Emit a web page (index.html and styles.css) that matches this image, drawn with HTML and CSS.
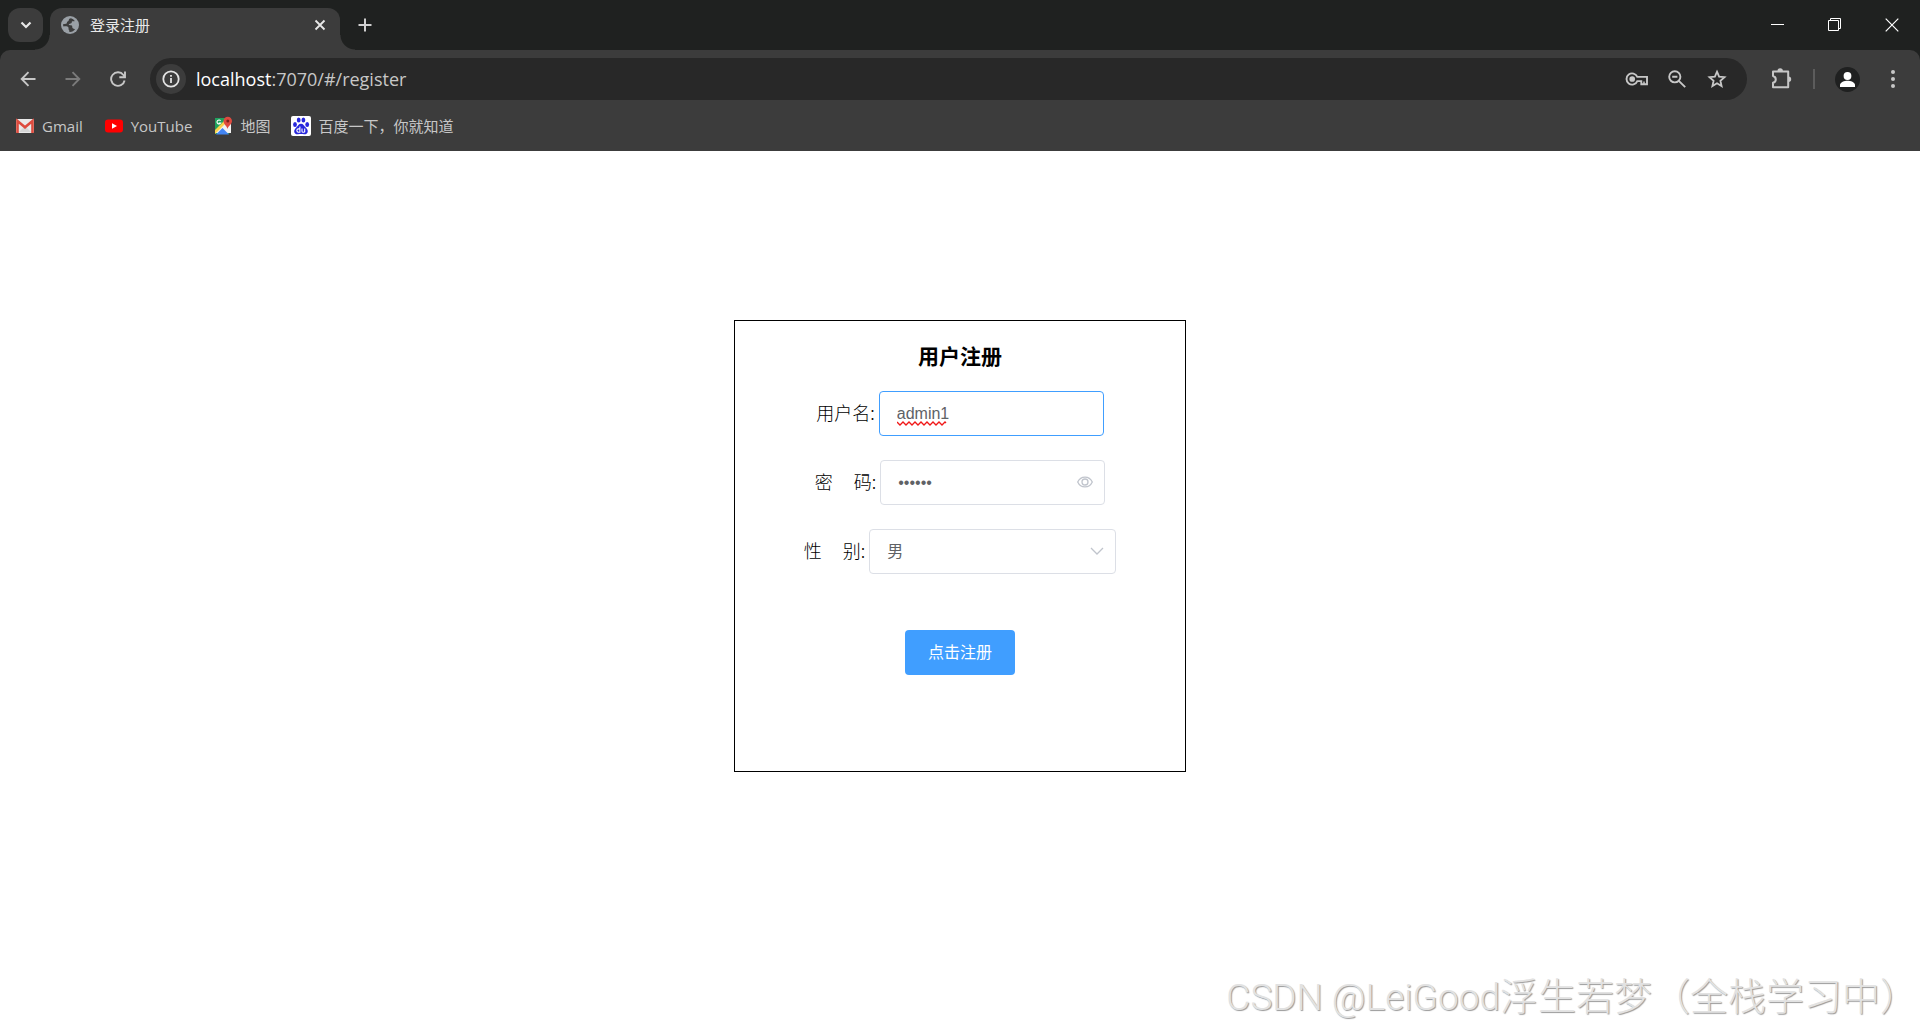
FILE: index.html
```html
<!DOCTYPE html>
<html lang="zh-CN">
<head>
<meta charset="utf-8">
<title>登录注册</title>
<link rel="stylesheet" href="styles.css">
</head>
<body>
<header class="browser">
  <div class="tabstrip">
    <button class="tab-search" type="button" aria-label="搜索标签页">
      <svg width="12" height="12" viewBox="0 0 12 12"><path d="M1.500 3.500 6 8l4.500-4.500" fill="none" stroke="#e8e8e8" stroke-width="2.200"/></svg>
    </button>
    <div class="tab">
      <svg width="18" height="18" viewBox="0 0 18 18"><circle cx="9" cy="9" r="9" fill="#9aa0a6"/><path d="M10 2.200c-3 .6-1.500 2.300-3 3-1.600.6-.6 2.200-1.800 2.600L2 8.300c0 1 .2 1.500.5 2.200 2-.3 4-.4 4.800.7.6 1-.2 2 .6 2.700.6.500.5 1.200.4 2 2.500.3 4.500-.9 5.800-2.700-.8-.8-1.900-.4-2.600-1.300-.6-1 .2-1.600-.7-2.300-1-.6-2.600 0-3.200-1 .7-1.400 1.800-.6 2.700-1.400.9-.8.1-1.700 1.100-2 1-.2 1.500.3 2.400-.3A7 7 0 0 0 10 2.200z" fill="#3c3c3c"/></svg>
      <span class="tab-title">登录注册</span>
      <button class="tab-close" type="button" aria-label="关闭">
        <svg width="12" height="12" viewBox="0 0 12 12"><path d="M1.500 1.500l9 9m0-9-9 9" stroke="#e8e8e8" stroke-width="1.800"/></svg>
      </button>
    </div>
    <button class="new-tab" type="button" aria-label="新标签页">
      <svg width="14" height="14" viewBox="0 0 14 14"><path d="M7 .5v13M.5 7h13" stroke="#d0d0d0" stroke-width="2"/></svg>
    </button>
    <div class="window-controls">
      <button type="button" aria-label="最小化"><svg width="13" height="13" viewBox="0 0 13 13"><path d="M0 6.500h13" stroke="#fff"/></svg></button>
      <button type="button" aria-label="还原"><svg width="13" height="13" viewBox="0 0 13 13" fill="none" stroke="#fff"><path d="M.5 2.500h10v10H.5zM2.500 2V.5h10v10H11"/></svg></button>
      <button type="button" aria-label="关闭窗口"><svg width="14" height="14" viewBox="0 0 14 14"><path d="M.7.7l12.600 12.600m0-12.600L.7 13.300" stroke="#fff" stroke-width="1.200"/></svg></button>
    </div>
  </div>

  <div class="chrome-body">
    <div class="toolbar">
      <button class="tool" type="button" aria-label="后退"><svg width="16" height="16" viewBox="0 0 16 16" fill="none" stroke="#c7c7c7" stroke-width="1.900"><path d="M15.500 8H2M8.500 1.200 1.700 8l6.800 6.800"/></svg></button>
      <button class="tool" type="button" aria-label="前进"><svg width="16" height="16" viewBox="0 0 16 16" fill="none" stroke="#7b7b7b" stroke-width="1.900"><path d="M.5 8H14M7.500 1.200 14.300 8l-6.800 6.800"/></svg></button>
      <button class="tool" type="button" aria-label="重新加载"><svg width="16" height="16" viewBox="0 0 16 16" fill="none" stroke="#c7c7c7" stroke-width="1.900"><path d="M14.600 9.500A6.800 6.800 0 1 1 13.400 4L15 5.700M15 .5v5.700H9.300"/></svg></button>
      <div class="omnibox">
        <button class="site-info" type="button" aria-label="网站信息"><svg width="18" height="18" viewBox="0 0 18 18" fill="none" stroke="#e3e3e3" stroke-width="1.800"><circle cx="9" cy="9" r="7.700"/><path d="M9 8v5M9 5v1.800"/></svg></button>
        <div class="url"><span class="host">localhost</span>:7070/#/register</div>
        <button class="omni-action" type="button" aria-label="密码"><svg width="24" height="14" viewBox="0 0 24 14" fill="none" stroke="#c7c7c7" stroke-width="1.900"><path d="M12.300 4.900A5.600 5.600 0 1 0 12.300 9.100h4v3.200h5.700V4.900z"/><circle cx="7.200" cy="7" r="1.900" fill="#c7c7c7"/><path d="M19 9.500v2.500" stroke-width="1.500"/></svg></button>
        <button class="omni-action" type="button" aria-label="缩放"><svg width="18" height="18" viewBox="0 0 18 18" fill="none" stroke="#c7c7c7" stroke-width="1.900"><circle cx="6.800" cy="6.800" r="5.600"/><path d="M10.800 10.800l6.400 6.400M4.200 6.800h5.200"/></svg></button>
        <button class="omni-action" type="button" aria-label="收藏"><svg width="20" height="20" viewBox="0 0 20 20" fill="none" stroke="#c7c7c7" stroke-width="1.800"><path d="M10 2.700l2.100 5 5.400.5-4.100 3.600 1.200 5.300L10 14.300l-4.600 2.800 1.200-5.300L2.500 8.200l5.400-.5z"/></svg></button>
      </div>
      <button class="tool" type="button" aria-label="扩展程序"><svg width="22" height="22" viewBox="0 0 22 22"><path d="M3 3.500h15.200v15.700H3v-4.400c3.700-1 3.700-5.800 0-6.800z" fill="none" stroke="#c7c7c7" stroke-width="2" stroke-linejoin="round"/><path d="M7.500 3a2.700 2.700 0 0 1 5.400 0zM18.500 8.500a2.700 2.700 0 0 1 0 5.400z" fill="#c7c7c7"/></svg></button>
      <span class="divider"></span>
      <button class="tool" type="button" aria-label="用户"><svg width="25" height="25" viewBox="0 0 25 25"><circle cx="12.500" cy="12.500" r="12.500" fill="#1f2020"/><circle cx="12.500" cy="9" r="3.900" fill="#fff"/><path d="M5 20v-2c0-2.700 4.500-4.200 7.500-4.200s7.500 1.500 7.500 4.200v2z" fill="#fff"/></svg></button>
      <button class="tool" type="button" aria-label="更多"><svg width="4" height="18" viewBox="0 0 4 18" fill="#c7c7c7"><circle cx="2" cy="2" r="2"/><circle cx="2" cy="9" r="2"/><circle cx="2" cy="16" r="2"/></svg></button>
    </div>
    <nav class="bookmarks">
      <a href="#gmail"><svg width="20" height="20" viewBox="0 0 20 20"><rect x="1" y="3" width="18" height="14" rx="1.500" fill="#e9e9e9"/><path d="M4 16l6-6 6 6z" fill="#d5d5d5"/><path d="M2.500 17V5L10 11.200 17.500 5v12" fill="none" stroke="#dd4b3e" stroke-width="2.600"/></svg>Gmail</a>
      <a href="#youtube"><svg width="20" height="20" viewBox="0 0 20 20"><rect x="1" y="3.500" width="18" height="13" rx="3" fill="#f00"/><path d="M8 7.200v5.600l5-2.800z" fill="#fff"/></svg>YouTube</a>
      <a href="#maps"><svg width="20" height="20" viewBox="0 0 20 20"><path d="M2 2h14v16H2z" fill="#1fa15d"/><path d="M2 17 15 4l3 3v10z" fill="#f2f2f2"/><path d="M2 14 11 5l2 2L2 18z" fill="#fbd24d"/><path d="M3 18.500l6.500-6.500 6.500 6.500z" fill="#4285f4"/><path d="M7.600 4.800a2 2 0 1 0 .1 2.200H5.800" fill="none" stroke="#fff" stroke-width="1.100"/><path d="M14.500 13c-.4-3-4-4.500-4-8a4.200 4.200 0 0 1 8.500 0c0 3.500-4 5-4.500 8z" fill="#de4a3f"/><circle cx="14.800" cy="5" r="1.500" fill="#7d211b"/></svg>地图</a>
      <a href="#baidu"><svg width="20" height="20" viewBox="0 0 20 20"><rect width="20" height="20" rx="2" fill="#fff"/><g fill="#2726dc"><ellipse cx="4" cy="8.600" rx="1.900" ry="2.500"/><ellipse cx="7.700" cy="4" rx="1.900" ry="2.600"/><ellipse cx="12.400" cy="4" rx="1.900" ry="2.600"/><ellipse cx="16.200" cy="8.600" rx="1.900" ry="2.500"/><path d="M10 7.800c2.300 0 3 2.200 4.700 3.600 4 3.500 1.600 7.300-1.700 6.800-2-.3-4-.3-6 0-3.300.5-5.700-3.300-1.700-6.800C7 10 7.700 7.800 10 7.800z"/></g><path d="M8.900 10.500v5.700H7.500a1.400 1.400 0 0 1 0-3.300h1.400M11 12.600v2.600c0 1.400 2.700 1.400 2.700 0v-2.600m0 0v3.600" fill="none" stroke="#fff" stroke-width="1.100"/></svg>百度一下，你就知道</a>
    </nav>
  </div>
</header>

<main class="page">
  <form class="card">
    <h3 class="title">用户注册</h3>
    <div class="row">
      <label class="label" for="username">用户名:</label>
      <span class="control">
        <input class="field username" id="username" type="text" value="admin1" spellcheck="false">
        <svg class="squiggle" width="52" height="5" viewBox="0 0 52 5" fill="none" stroke="#f01818" stroke-width="1.300"><path d="M0 1l3 3 3-3 3 3 3-3 3 3 3-3 3 3 3-3 3 3 3-3 3 3 3-3 3 3 3-3 3 3 3-3 1 1"/></svg>
      </span>
    </div>
    <div class="row">
      <label class="label spaced" for="password"><span>密</span><span>码:</span></label>
      <span class="control">
        <input class="field" id="password" type="password" value="123456">
        <svg class="affix" width="16" height="16" viewBox="0 0 16 16" fill="none" stroke="#c0c4cc" stroke-width="1.300"><path d="M.7 8C3.800 1.400 12.200 1.400 15.300 8 12.200 14.600 3.800 14.600.7 8z"/><circle cx="8" cy="8" r="3"/></svg>
      </span>
    </div>
    <div class="row">
      <label class="label spaced" for="gender"><span>性</span><span>别:</span></label>
      <span class="control">
        <select class="field gender" id="gender"><option>男</option><option>女</option></select>
        <svg class="affix" width="14" height="16" viewBox="0 0 14 16" fill="none" stroke="#c0c4cc" stroke-width="1.300"><path d="M1 5l6 6 6-6"/></svg>
      </span>
    </div>
    <button class="submit" type="button">点击注册</button>
  </form>
  <p class="watermark"><span class="latin">CSDN @LeiGood</span>浮生若梦（全栈学习中）</p>
</main>
</body>
</html>
```
FILE: styles.css
```css
* {
  box-sizing: border-box;
}

body {
  margin: 0;
  min-height: 100vh;
  display: flex;
  flex-direction: column;
  background: #fff;
  font-family: "Noto Sans CJK SC", sans-serif;
}

button {
  padding: 0;
  border: 0;
  background: none;
  font: inherit;
}

svg {
  display: block;
  flex: none;
}

/* Browser frame */
.browser {
  background: #1f2120;
  font-family: "Open Sans", "Noto Sans CJK SC", sans-serif;
}

.tabstrip {
  display: flex;
  height: 50px;
  padding: 8px 0 0 8px;
}

.tab-search {
  display: grid;
  place-items: center;
  width: 35px;
  height: 34px;
  border-radius: 12px;
  background: #3c3c3c;
}

.tab {
  position: relative;
  display: flex;
  align-items: center;
  width: 290px;
  margin-left: 7px;
  padding: 0 9px 8px 11px;
  border-radius: 12px 12px 0 0;
  background: #3c3c3c;
}

.tab::before,
.tab::after {
  content: "";
  position: absolute;
  bottom: 0;
  width: 15px;
  height: 15px;
}

.tab::before {
  right: 100%;
  background: radial-gradient(circle at 0 0, transparent 14px, #3c3c3c 15px);
}

.tab::after {
  left: 100%;
  background: radial-gradient(circle at 100% 0, transparent 14px, #3c3c3c 15px);
}

.tab-title {
  flex: 1;
  margin-left: 11px;
  color: #e8e8e8;
  font-size: 15px;
  line-height: 20px;
}

.tab-close {
  display: grid;
  place-items: center;
  width: 22px;
  height: 22px;
}

.new-tab {
  display: grid;
  place-items: center;
  width: 34px;
  height: 34px;
  margin-left: 8px;
}

.window-controls {
  display: flex;
  margin-left: auto;
}

.window-controls button {
  display: grid;
  place-items: center;
  width: 57px;
  height: 33px;
}

.chrome-body {
  border-radius: 10px 10px 0 0;
  background: #3c3c3c;
}

.toolbar {
  display: flex;
  align-items: center;
  padding: 8px 5px 0;
}

.tool {
  display: grid;
  place-items: center;
  width: 45px;
  height: 42px;
}

.omnibox {
  flex: 1;
  display: flex;
  align-items: center;
  height: 42px;
  margin: 0 11px 0 10px;
  padding: 0 10px 0 6px;
  border-radius: 21px;
  background: #282828;
}

.site-info {
  display: grid;
  place-items: center;
  width: 30px;
  height: 30px;
  border-radius: 50%;
  background: #3c3c3c;
}

.url {
  flex: 1;
  margin-left: 10px;
  color: #c7c7c7;
  font-size: 18px;
  line-height: 24px;
}

.host {
  color: #fff;
}

.omni-action {
  display: grid;
  place-items: center;
  width: 40px;
  height: 40px;
}

.divider {
  width: 2px;
  height: 20px;
  margin: 0 10px;
  background: #5c5c5c;
}

.bookmarks {
  display: flex;
  align-items: center;
  gap: 21px;
  height: 51px;
  padding: 0 15px;
}

.bookmarks a {
  display: flex;
  align-items: center;
  gap: 7px;
  color: #c7c7c7;
  font-size: 15px;
  line-height: 20px;
  text-decoration: none;
}

/* Registration page */
.page {
  flex: 1;
  display: flex;
  flex-direction: column;
  justify-content: space-between;
  padding: 169px 2px 8px;
}

.card {
  display: flex;
  flex-direction: column;
  align-items: center;
  gap: 24px;
  width: 452px;
  margin: 0 auto;
  padding: 22px 0 96px;
  border: 1px solid #000;
}

.title {
  margin: 0;
  font-size: 21px;
  line-height: 24px;
}

.row {
  display: flex;
  align-items: center;
  gap: 4px;
}

.label {
  padding-bottom: 4px;
  color: #000;
  font-size: 18px;
  font-weight: 300;
  line-height: 24px;
}

.spaced {
  display: flex;
  gap: 21px;
}

.control {
  position: relative;
}

.field {
  display: block;
  width: 225px;
  height: 45px;
  padding: 0 17px;
  border: 1px solid #dcdfe6;
  border-radius: 4px;
  outline: 0;
  background: #fff;
  color: #606266;
  font-family: "Liberation Sans", "Noto Sans CJK SC", sans-serif;
  font-size: 16px;
}

.username {
  border-color: #409eff;
}

.gender {
  width: 247px;
  appearance: none;
}

/* Spelling mark under the typed name */
.squiggle {
  position: absolute;
  top: 30px;
  left: 18px;
  pointer-events: none;
}

.affix {
  position: absolute;
  top: 14px;
  right: 12px;
  pointer-events: none;
}

.submit {
  height: 45px;
  margin-top: 32px;
  padding: 0 23px 3px;
  border-radius: 4px;
  background: #409eff;
  color: #fff;
  font-size: 16px;
}

.watermark {
  margin: 0;
  align-self: flex-end;
  color: #e2e2e2;
  font-family: Roboto, "Noto Sans CJK SC", sans-serif;
  font-size: 38px;
  font-weight: 300;
  line-height: 48px;
  text-shadow: 1px 1px 1px #999;
}

.latin {
  font-size: 37px;
}
```
